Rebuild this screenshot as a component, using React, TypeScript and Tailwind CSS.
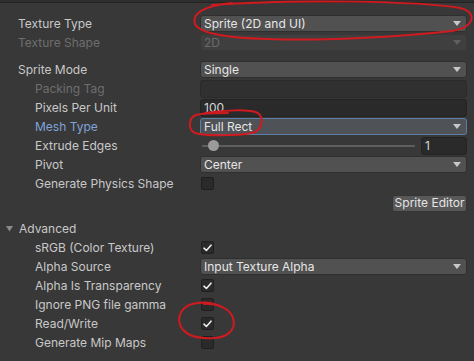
import React from 'react';

const font = { fontFamily: 'Inter, "Noto Sans", sans-serif' };

const Arrow = ({ dim }: { dim?: boolean }) => (
  <svg width="8" height="5" viewBox="0 0 8 5" className="shrink-0">
    <path d="M0 0 L8 0 L4 5 Z" fill={dim ? '#5f5f5f' : '#c8c8c8'} />
  </svg>
);

const Dropdown = ({ value, dim, focus }: { value: string; dim?: boolean; focus?: boolean }) => (
  <div
    className={`h-[17px] w-full flex items-center justify-between pl-[3px] pr-[5px] rounded-[3px] border ${
      dim
        ? 'bg-[#3f3f3f] border-[#383838] text-[#6b6b6b]'
        : focus
        ? 'bg-[#4f5357] border-[#5b7ea6] text-[#e6e6e6]'
        : 'bg-[#515151] border-[#2f2f2f] text-[#e6e6e6]'
    }`}
  >
    <span className="leading-none">{value}</span>
    <Arrow dim={dim} />
  </div>
);

const TextField = ({ value, dim }: { value?: string; dim?: boolean }) => (
  <div
    className={`h-[18px] w-full flex items-center pl-[3px] rounded-[3px] border text-[#d8d8d8] ${
      dim ? 'bg-[#303030] border-[#2a2a2a]' : 'bg-[#2a2a2a] border-[#232323]'
    }`}
  >
    <span className="leading-none">{value}</span>
  </div>
);

const Check = ({ on }: { on?: boolean }) => (
  <div className="w-[13px] h-[13px] ml-[1px] rounded-[2px] bg-[#2a2a2a] border border-[#1f1f1f] flex items-center justify-center">
    {on && (
      <svg width="9" height="8" viewBox="0 0 9 8">
        <path d="M1 4.2 L3.4 6.5 L8 1.2" stroke="#ececec" strokeWidth="1.6" fill="none" strokeLinecap="round" strokeLinejoin="round" />
      </svg>
    )}
  </div>
);

const Row = ({
  label,
  indent,
  dim,
  blue,
  children,
}: {
  label: string;
  indent?: boolean;
  dim?: boolean;
  blue?: boolean;
  children?: React.ReactNode;
}) => (
  <div className="h-[19px] flex items-center pr-[7px]">
    <div
      className={`shrink-0 ${indent ? 'w-[165px] pl-[35px]' : 'w-[182px] pl-[18px]'} box-content ${
        dim ? 'text-[#6e6e6e]' : blue ? 'text-[#7fa3da]' : 'text-[#c8c8c8]'
      }`}
    >
      {label}
    </div>
    <div className="flex-1 flex items-center min-w-0">{children}</div>
  </div>
);

export default function App() {
  return (
    <div className="relative w-[474px] h-[361px] bg-[#383838] overflow-hidden text-[12px]" style={font}>
      <div className="h-[3px] bg-[#2e2e2e] border-b border-[#232323]" />
      <div className="pt-[11px]">
        <Row label="Texture Type">
          <Dropdown value="Sprite (2D and UI)" />
        </Row>
        <Row label="Texture Shape" dim>
          <Dropdown value="2D" dim />
        </Row>
        <div className="h-[8px]" />
        <Row label="Sprite Mode">
          <Dropdown value="Single" />
        </Row>
        <Row label="Packing Tag" indent dim>
          <TextField dim />
        </Row>
        <Row label="Pixels Per Unit" indent>
          <TextField value="100" />
        </Row>
        <Row label="Mesh Type" indent blue>
          <Dropdown value="Full Rect" focus />
        </Row>
        <Row label="Extrude Edges" indent>
          <div className="flex-1 flex items-center h-[17px] relative">
            <div className="ml-[2px] flex-1 h-[2px] bg-[#5e5e5e] rounded" />
            <div className="absolute left-[8px] top-[3px] w-[11px] h-[11px] rounded-full bg-[#9a9a9a]" />
          </div>
          <div className="ml-[6px] w-[46px]">
            <TextField value="1" />
          </div>
        </Row>
        <Row label="Pivot" indent>
          <Dropdown value="Center" />
        </Row>
        <Row label="Generate Physics Shape" indent>
          <Check />
        </Row>
        <div className="h-[20px] flex items-center justify-end pr-[7px]">
          <div className="w-[75px] h-[17px] rounded-[3px] bg-[#585858] border border-[#353535] text-[#e6e6e6] flex items-center justify-center">
            Sprite Editor
          </div>
        </div>
        <div className="h-[6px]" />
        <div className="h-[19px] flex items-center pl-[6px] text-[#c8c8c8]">
          <svg width="8" height="6" viewBox="0 0 8 6" className="mr-[5px]">
            <path d="M0 0 L7 0 L3.5 5.5 Z" fill="#8a8a8a" />
          </svg>
          Advanced
        </div>
        <Row label="sRGB (Color Texture)" indent>
          <Check on />
        </Row>
        <Row label="Alpha Source" indent>
          <Dropdown value="Input Texture Alpha" />
        </Row>
        <Row label="Alpha Is Transparency" indent>
          <Check on />
        </Row>
        <Row label="Ignore PNG file gamma" indent>
          <Check />
        </Row>
        <Row label="Read/Write" indent>
          <Check on />
        </Row>
        <Row label="Generate Mip Maps" indent>
          <Check />
        </Row>
      </div>

      <svg className="absolute inset-0 pointer-events-none" width="474" height="361" viewBox="0 0 474 361">
        <g stroke="#d11a1f" strokeWidth="2" fill="none" strokeLinecap="round">
          <path d="M212 5 C290 -1 420 1 460 8 C478 12 475 27 452 31 C400 37 320 41 268 39 C228 38 200 34 195 24 C192 14 202 6 232 3" />
          <path d="M205 113 C225 110 250 109 258 113 C264 118 263 130 252 133 C235 136 205 136 195 133 C188 130 188 118 196 115 C203 113 215 113 228 113" />
          <path d="M222 307 C208 300 188 301 181 312 C175 325 184 337 204 338 C226 340 237 331 233 318 C230 308 216 303 204 304" />
        </g>
      </svg>
    </div>
  );
}
